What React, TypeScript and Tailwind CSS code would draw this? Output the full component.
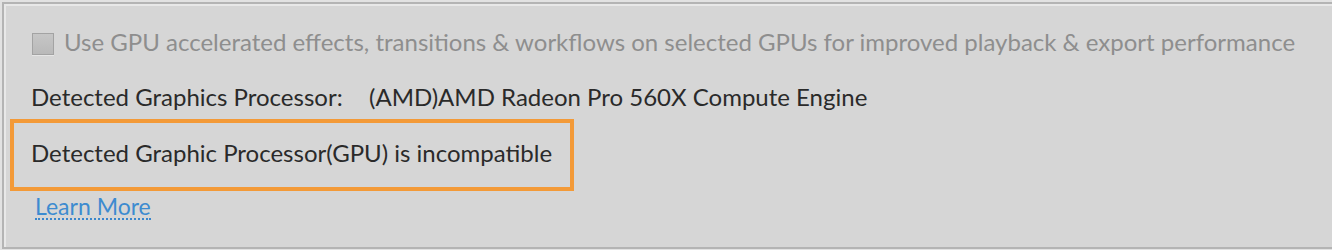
const App = () => {
  return (
    <div className="h-[250px] w-[1332px] overflow-hidden bg-[#e2e2e2] pt-[2px] pl-[2px] font-['Lato',sans-serif]">
      <div className="h-[247px] border-t-2 border-l-2 border-b-2 border-[#b4b4b4] bg-[#d6d6d6] shadow-[inset_2px_2px_0_#e8e8e8] pl-[6px] pt-[18px] text-[24px]">
        <div className="flex h-[40px] items-center pl-[22px]">
          <span className="mt-[4px] h-[22px] w-[22px] shrink-0 border border-[#a3a3a3] bg-gradient-to-b from-[#c6c6c6] to-[#b9b9b9] shadow-[0_1px_0_#e6e6e6]" />
          <span className="ml-[10px] text-[#8e8e8e]">
            Use GPU accelerated effects, transitions &amp; workflows on selected GPUs for improved playback &amp; export performance
          </span>
        </div>
        <div className="mt-[15px] flex h-[40px] items-center pl-[21px] text-[#2a2a2a]">
          <span className="w-[338px]">Detected Graphics Processor:</span>
          <span>(AMD)AMD Radeon Pro 560X Compute Engine</span>
        </div>
        <div className="mt-[2px] flex h-[72px] w-[564px] items-center border-4 border-[#f39a38] pb-[4px] pl-[17px] text-[#2a2a2a]">
          Detected Graphic Processor(GPU) is incompatible
        </div>
        <div className="flex h-[32px] items-center pl-[25px]">
          <a className="border-b-2 border-dotted border-[#3a86cc] text-[23px] leading-[24px] text-[#3d8bd0]">Learn More</a>
        </div>
      </div>
    </div>
  )
}

export default App
